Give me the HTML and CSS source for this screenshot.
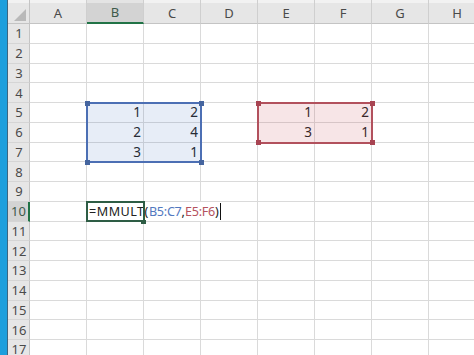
FILE: index.html
```html
<!DOCTYPE html>
<html lang="ja">
<head>
<meta charset="utf-8">
<title>MMULT</title>
<link rel="stylesheet" href="styles.css">
</head>
<body>
<div class="app">
  <div class="bar"></div>
  <div class="sheet">
    <div class="grid">
      <div class="corner"><span class="tri"></span></div>
      <div class="ch">A</div><div class="ch sel">B</div><div class="ch">C</div><div class="ch">D</div><div class="ch">E</div><div class="ch">F</div><div class="ch">G</div><div class="ch">H</div>

      <div class="rh">1</div><div class="c"></div><div class="c"></div><div class="c"></div><div class="c"></div><div class="c"></div><div class="c"></div><div class="c"></div><div class="c"></div>
      <div class="rh">2</div><div class="c"></div><div class="c"></div><div class="c"></div><div class="c"></div><div class="c"></div><div class="c"></div><div class="c"></div><div class="c"></div>
      <div class="rh">3</div><div class="c"></div><div class="c"></div><div class="c"></div><div class="c"></div><div class="c"></div><div class="c"></div><div class="c"></div><div class="c"></div>
      <div class="rh">4</div><div class="c"></div><div class="c"></div><div class="c"></div><div class="c"></div><div class="c"></div><div class="c"></div><div class="c"></div><div class="c"></div>
      <div class="rh">5</div><div class="c"></div><div class="c">1</div><div class="c">2</div><div class="c"></div><div class="c">1</div><div class="c">2</div><div class="c"></div><div class="c"></div>
      <div class="rh">6</div><div class="c"></div><div class="c">2</div><div class="c">4</div><div class="c"></div><div class="c">3</div><div class="c">1</div><div class="c"></div><div class="c"></div>
      <div class="rh">7</div><div class="c"></div><div class="c">3</div><div class="c">1</div><div class="c"></div><div class="c"></div><div class="c"></div><div class="c"></div><div class="c"></div>
      <div class="rh">8</div><div class="c"></div><div class="c"></div><div class="c"></div><div class="c"></div><div class="c"></div><div class="c"></div><div class="c"></div><div class="c"></div>
      <div class="rh">9</div><div class="c"></div><div class="c"></div><div class="c"></div><div class="c"></div><div class="c"></div><div class="c"></div><div class="c"></div><div class="c"></div>
      <div class="rh sel">10</div><div class="c"></div><div class="c"></div><div class="c"></div><div class="c"></div><div class="c"></div><div class="c"></div><div class="c"></div><div class="c"></div>
      <div class="rh">11</div><div class="c"></div><div class="c"></div><div class="c"></div><div class="c"></div><div class="c"></div><div class="c"></div><div class="c"></div><div class="c"></div>
      <div class="rh">12</div><div class="c"></div><div class="c"></div><div class="c"></div><div class="c"></div><div class="c"></div><div class="c"></div><div class="c"></div><div class="c"></div>
      <div class="rh">13</div><div class="c"></div><div class="c"></div><div class="c"></div><div class="c"></div><div class="c"></div><div class="c"></div><div class="c"></div><div class="c"></div>
      <div class="rh">14</div><div class="c"></div><div class="c"></div><div class="c"></div><div class="c"></div><div class="c"></div><div class="c"></div><div class="c"></div><div class="c"></div>
      <div class="rh">15</div><div class="c"></div><div class="c"></div><div class="c"></div><div class="c"></div><div class="c"></div><div class="c"></div><div class="c"></div><div class="c"></div>
      <div class="rh">16</div><div class="c"></div><div class="c"></div><div class="c"></div><div class="c"></div><div class="c"></div><div class="c"></div><div class="c"></div><div class="c"></div>
      <div class="rh">17</div><div class="c"></div><div class="c"></div><div class="c"></div><div class="c"></div><div class="c"></div><div class="c"></div><div class="c"></div><div class="c"></div>
    </div>
    <div class="overlay">
      <div class="rng rng-blue"><i class="h tl"></i><i class="h tr"></i><i class="h bl"></i><i class="h br"></i></div>
      <div class="rng rng-red"><i class="h tl"></i><i class="h tr"></i><i class="h bl"></i><i class="h br"></i></div>
      <div class="mask"></div>
      <div class="active"><i class="fill"></i></div>
      <div class="edit"><span class="fn">=MMULT(</span><span class="ref-b">B5:C7</span>,<span class="ref-r">E5:F6</span>)<span class="caret"></span></div>
    </div>
  </div>
</div>
</body>
</html>
```
FILE: styles.css
```css
html, body {
  margin: 0;
  padding: 0;
  background: #ffffff;
}
.app {
  display: flex;
  width: 474px;
  height: 355px;
  overflow: hidden;
  font-family: "Noto Sans", "Noto Sans CJK JP", sans-serif;
  color: #222;
}
.bar {
  flex: 0 0 7px;
  background: #1d9fdd;
  border-right: 1px solid #3d6680;
}
.sheet {
  position: relative;
  flex: 1;
  overflow: hidden;
}
.grid, .overlay {
  display: grid;
  grid-template-columns: 22px repeat(8, 57px);
  grid-template-rows: 24px repeat(17, 19.75px);
}
.grid > div {
  box-sizing: border-box;
}
.corner {
  background: linear-gradient(#f2f2f2 0 3px, #e6e6e6 3px);
  border-right: 1px solid #c4c4c4;
  border-bottom: 1px solid #c4c4c4;
  display: flex;
  align-items: flex-end;
  justify-content: flex-end;
  padding: 0 3px 2px 0;
}
.tri {
  width: 0;
  height: 0;
  border-left: 12px solid transparent;
  border-bottom: 12px solid #b9b9b9;
}
.ch {
  background: linear-gradient(#f2f2f2 0 3px, #e6e6e6 3px);
  border-right: 1px solid #cfcfcf;
  border-bottom: 1px solid #c4c4c4;
  display: flex;
  align-items: center;
  justify-content: center;
  font-size: 13px;
  color: #4a4a4a;
  padding-top: 2px;
}
.ch.sel {
  background: linear-gradient(#e4e4e4 0 3px, #d3d3d3 3px);
  border-bottom: 2px solid #217346;
  color: #3e5a4a;
}
.rh {
  background: #e6e6e6;
  border-right: 1px solid #c4c4c4;
  border-bottom: 1px solid #d5d5d5;
  display: flex;
  align-items: center;
  justify-content: center;
  font-size: 13px;
  color: #4a4a4a;
  padding-left: 1px;
}
.rh.sel {
  background: #d3d3d3;
  border-right: 2px solid #217346;
  color: #3e5a4a;
}
.c {
  border-right: 1px solid #dadada;
  border-bottom: 1px solid #dadada;
  display: flex;
  align-items: center;
  justify-content: flex-end;
  padding-right: 2px;
  font-size: 13.5px;
  color: #222;
}
.overlay {
  position: absolute;
  inset: 0;
  pointer-events: none;
}
.rng {
  position: relative;
  margin: -1px;
  border: 2px solid;
}
.rng-blue {
  grid-row: 6 / 9;
  grid-column: 3 / 5;
  border-color: #4c6fb4;
  background: rgba(68, 114, 196, 0.13);
}
.rng-red {
  grid-row: 6 / 8;
  grid-column: 6 / 8;
  border-color: #b2515d;
  background: rgba(196, 70, 84, 0.14);
}
.h {
  position: absolute;
  width: 5px;
  height: 5px;
}
.rng-blue .h { background: #45659f; }
.rng-red .h { background: #a84452; }
.tl { left: -3.5px; top: -3.5px; }
.tr { right: -3.5px; top: -3.5px; }
.bl { left: -3.5px; bottom: -3.5px; }
.br { right: -3.5px; bottom: -3.5px; }
.mask {
  grid-row: 11 / 12;
  grid-column: 4 / 6;
  margin: 0 1px 1px 0;
  background: #ffffff;
}
.active {
  grid-row: 11 / 12;
  grid-column: 3 / 4;
  position: relative;
  margin: -1px -1px 0 -1px;
  border: 2px solid #2e5d45;
}
.fill {
  position: absolute;
  right: -3px;
  bottom: -4px;
  width: 5px;
  height: 4px;
  background: #2e5d45;
}
.edit {
  grid-row: 11 / 12;
  grid-column: 3 / 6;
  display: flex;
  align-items: center;
  padding-left: 2px;
  font-size: 12.6px;
  color: #222;
  white-space: nowrap;
}
.fn { letter-spacing: 0.5px; }
.ref-b { color: #5279bf; letter-spacing: -0.25px; }
.ref-r { color: #b5525e; letter-spacing: -0.25px; }
.caret {
  display: inline-block;
  width: 1px;
  height: 17px;
  background: #111;
  margin-left: 1px;
}
```
